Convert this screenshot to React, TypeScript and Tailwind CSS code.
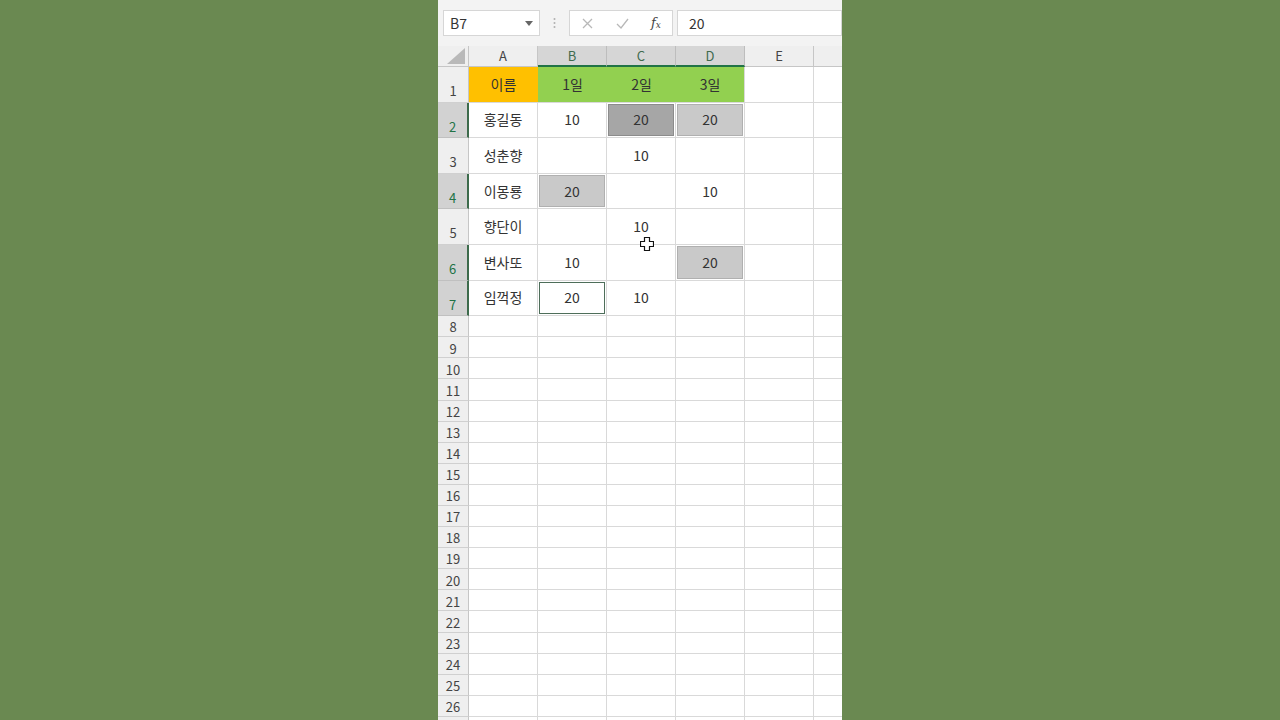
import React from 'react';

type Cell = { v?: string; fill?: string; edge?: string; sel?: boolean };

const FONT = { fontFamily: '"Noto Sans CJK KR", "Noto Sans", "Liberation Sans", sans-serif' };

const HEAD_FILL: Record<string, string> = {
    A: 'bg-[#ffc000]',
    B: 'bg-[#92d050]',
    C: 'bg-[#92d050]',
    D: 'bg-[#92d050]',
};

const rows: { n: number; hi: boolean; cells: Cell[] }[] = [
    { n: 2, hi: true, cells: [{ v: '홍길동' }, { v: '10' }, { v: '20', fill: 'bg-[#a6a6a6]', edge: 'border-[#8c8c8c]' }, { v: '20', fill: 'bg-[#c9c9c9]', edge: 'border-[#b0b0b0]' }, {}] },
    { n: 3, hi: false, cells: [{ v: '성춘향' }, {}, { v: '10' }, {}, {}] },
    { n: 4, hi: true, cells: [{ v: '이몽룡' }, { v: '20', fill: 'bg-[#c9c9c9]', edge: 'border-[#b0b0b0]' }, {}, { v: '10' }, {}] },
    { n: 5, hi: false, cells: [{ v: '향단이' }, {}, { v: '10' }, {}, {}] },
    { n: 6, hi: true, cells: [{ v: '변사또' }, { v: '10' }, {}, { v: '20', fill: 'bg-[#c9c9c9]', edge: 'border-[#b0b0b0]' }, {}] },
    { n: 7, hi: true, cells: [{ v: '임꺽정' }, { v: '20', sel: true }, { v: '10' }, {}, {}] },
];

// rows below the table, the last one runs off the bottom edge
const small = Array.from({ length: 19 }, (_, i) => i + 8);

function RowHead({ n, hi, tall }: { n: number; hi: boolean; tall: boolean }) {
    return (
        <div
            className={`w-[31px] shrink-0 flex justify-center text-[13px] border-b ${tall ? 'items-end pb-[1px]' : 'items-center pt-[2px]'} ${hi ? 'bg-[#d2d2d2] text-[#217346] border-r-2 border-r-[#3d6b4c] border-b-[#c0c0c0]' : 'bg-[#efefef] text-[#444] border-r border-r-[#c6c6c6] border-b-[#d0d0d0]'}`}
        >
            {n}
        </div>
    );
}

function DataCell({ cell }: { cell: Cell }) {
    if (cell.fill) {
        return (
            <div className="w-[69px] shrink-0 flex p-[1px] border-r border-b border-[#d9d9d9]">
                <div className={`flex-1 flex items-center justify-center border ${cell.fill} ${cell.edge}`}>{cell.v}</div>
            </div>
        );
    }
    if (cell.sel) {
        return (
            <div className="w-[69px] shrink-0 flex p-[1px] border-r border-b border-[#d9d9d9]">
                <div className="flex-1 flex items-center justify-center border border-[#4e6e5a]">{cell.v}</div>
            </div>
        );
    }
    return (
        <div className="w-[69px] shrink-0 flex items-center justify-center border-r border-b border-[#d9d9d9]">{cell.v}</div>
    );
}

export default function App() {
    return (
        <div className="w-[1280px] h-[720px] overflow-hidden bg-[#6a8951] flex justify-center" style={FONT}>
            <div className="w-[404px] h-[720px] overflow-hidden bg-white relative text-[#333]">
                {/* formula bar */}
                <div className="h-[46px] bg-[#f3f3f3] flex items-start pt-[10px] pl-[5px]">
                    <div className="w-[97px] h-[26px] bg-white border border-[#d6d6d6] flex items-center justify-between pl-[6px] pr-[6px] text-[14px] text-[#333]">
                        <span>B7</span>
                        <svg width="8" height="5" viewBox="0 0 8 5"><path d="M0 0 L8 0 L4 5 Z" fill="#666" /></svg>
                    </div>
                    <div className="w-[29px] h-[26px] flex items-center justify-center">
                        <svg width="3" height="12" viewBox="0 0 3 12">
                            <circle cx="1.5" cy="2" r="1" fill="#b0b0b0" />
                            <circle cx="1.5" cy="6" r="1" fill="#b0b0b0" />
                            <circle cx="1.5" cy="10" r="1" fill="#b0b0b0" />
                        </svg>
                    </div>
                    <div className="w-[104px] h-[26px] bg-white border border-[#d6d6d6] flex items-center">
                        <div className="w-[34px] flex justify-center">
                            <svg width="11" height="11" viewBox="0 0 11 11"><path d="M1 1 L10 10 M10 1 L1 10" stroke="#b8b8b8" strokeWidth="1.3" /></svg>
                        </div>
                        <div className="w-[36px] flex justify-center">
                            <svg width="13" height="11" viewBox="0 0 13 11"><path d="M1 6 L5 10 L12 1" stroke="#b8b8b8" strokeWidth="1.3" fill="none" /></svg>
                        </div>
                        <div className="w-[32px] flex justify-center items-baseline italic text-[#444]" style={{ fontFamily: '"DejaVu Serif", "Liberation Serif", serif' }}>
                            <span className="text-[13px]">f</span>
                            <span className="text-[9px] relative top-[1px]">x</span>
                        </div>
                    </div>
                    <div className="ml-[4px] flex-1 h-[26px] bg-white border border-[#d6d6d6] flex items-center pl-[11px] text-[14px] text-[#333]">20</div>
                </div>

                {/* column headers */}
                <div className="flex h-[21px] text-[13px]">
                    <div className="w-[31px] shrink-0 bg-[#efefef] border-r border-b border-[#c6c6c6] flex items-end justify-end pr-[3px] pb-[2px]">
                        <svg width="18" height="16" viewBox="0 0 18 16"><path d="M18 0 L18 16 L0 16 Z" fill="#b9b9b9" /></svg>
                    </div>
                    {['A', 'B', 'C', 'D', 'E'].map((c) => {
                        const hi = c === 'B' || c === 'C' || c === 'D';
                        return (
                            <div
                                key={c}
                                className={`w-[69px] shrink-0 flex items-center justify-center border-r ${hi ? 'bg-[#d6d6d6] text-[#3f6b4e] border-r-[#bdbdbd] border-b-2 border-b-[#217346]' : 'bg-[#efefef] text-[#444] border-r-[#c6c6c6] border-b border-b-[#c6c6c6]'}`}
                            >
                                {c}
                            </div>
                        );
                    })}
                    <div className="flex-1 bg-[#efefef] border-b border-[#c6c6c6]" />
                </div>

                {/* row 1 */}
                <div className="flex h-[35.6px] text-[14px]">
                    <RowHead n={1} hi={false} tall />
                    <div className={`w-[69px] shrink-0 flex items-center justify-center border-b border-[#d9d9d9] ${HEAD_FILL.A}`}>이름</div>
                    <div className={`w-[69px] shrink-0 flex items-center justify-center border-b border-[#d9d9d9] ${HEAD_FILL.B}`}>1일</div>
                    <div className={`w-[69px] shrink-0 flex items-center justify-center border-b border-[#d9d9d9] ${HEAD_FILL.C}`}>2일</div>
                    <div className={`w-[69px] shrink-0 flex items-center justify-center border-r border-b border-[#d9d9d9] ${HEAD_FILL.D}`}>3일</div>
                    <div className="w-[69px] shrink-0 border-r border-b border-[#d9d9d9]" />
                    <div className="flex-1 border-b border-[#d9d9d9]" />
                </div>

                {rows.map((r) => (
                    <div key={r.n} className="flex h-[35.6px] text-[14px]">
                        <RowHead n={r.n} hi={r.hi} tall />
                        {r.cells.map((c, i) => (
                            <DataCell key={i} cell={c} />
                        ))}
                        <div className="flex-1 border-b border-[#d9d9d9]" />
                    </div>
                ))}

                {small.map((n) => (
                    <div key={n} className="flex h-[21.1px]">
                        <RowHead n={n} hi={false} tall={false} />
                        {[0, 1, 2, 3, 4].map((i) => (
                            <div key={i} className="w-[69px] shrink-0 border-r border-b border-[#d9d9d9]" />
                        ))}
                        <div className="flex-1 border-b border-[#d9d9d9]" />
                    </div>
                ))}
                <div className="flex h-[20px]">
                    <div className="w-[31px] shrink-0 bg-[#efefef] border-r border-[#c6c6c6]" />
                    {[0, 1, 2, 3, 4].map((i) => (
                        <div key={i} className="w-[69px] shrink-0 border-r border-[#d9d9d9]" />
                    ))}
                </div>

                {/* mouse cursor */}
                <svg className="absolute left-[202px] top-[237px]" width="14" height="14" viewBox="0 0 14 14">
                    <path d="M4.5 0.5 H9.5 V4.5 H13.5 V9.5 H9.5 V13.5 H4.5 V9.5 H0.5 V4.5 H4.5 Z" fill="#fff" stroke="#111" strokeWidth="1.2" />
                </svg>
            </div>
        </div>
    );
}
